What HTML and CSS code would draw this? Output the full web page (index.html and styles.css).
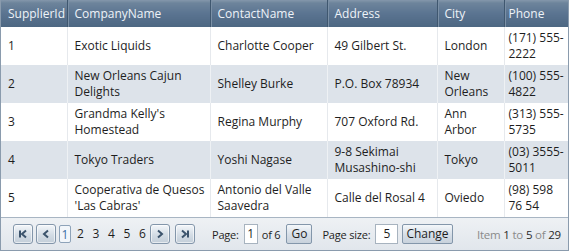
FILE: index.html
```html
<!DOCTYPE html>
<html>
<head>
<meta charset="utf-8">
<link rel="stylesheet" href="styles.css">
</head>
<body>
<div class="grid">
  <table class="table">
    <colgroup>
      <col class="c1"><col class="c2"><col class="c3"><col class="c4"><col class="c5"><col class="c6">
    </colgroup>
    <thead>
      <tr>
        <th>SupplierId</th><th>CompanyName</th><th>ContactName</th><th>Address</th><th>City</th><th class="ph">Phone</th>
      </tr>
    </thead>
    <tbody>
      <tr><td>1</td><td>Exotic Liquids</td><td>Charlotte Cooper</td><td>49 Gilbert St.</td><td>London</td><td class="ph">(171) 555-<wbr>2222</td></tr>
      <tr class="alt"><td>2</td><td>New Orleans Cajun Delights</td><td>Shelley Burke</td><td>P.O. Box 78934</td><td>New Orleans</td><td class="ph">(100) 555-<wbr>4822</td></tr>
      <tr><td>3</td><td>Grandma Kelly's Homestead</td><td>Regina Murphy</td><td>707 Oxford Rd.</td><td>Ann Arbor</td><td class="ph">(313) 555-<wbr>5735</td></tr>
      <tr class="alt"><td>4</td><td>Tokyo Traders</td><td>Yoshi Nagase</td><td>9-8 Sekimai Musashino-shi</td><td>Tokyo</td><td class="ph">(03) 3555-<wbr>5011</td></tr>
      <tr><td>5</td><td>Cooperativa de Quesos 'Las Cabras'</td><td>Antonio del Valle Saavedra</td><td>Calle del Rosal 4</td><td>Oviedo</td><td class="ph">(98) 598<br>76 54</td></tr>
    </tbody>
  </table>
  <div class="pager">
    <div class="nav">
      <span class="pbtn"><svg width="12" height="10" viewBox="0 0 12 10"><path d="M3 1.5V8.5" stroke="#3b536c" stroke-width="2" fill="none"/><path d="M9 1.5L5 5L9 8.5" stroke="#3b536c" stroke-width="2" fill="none"/></svg></span>
      <span class="pbtn"><svg width="12" height="10" viewBox="0 0 12 10"><path d="M8 1.5L4 5L8 8.5" stroke="#3b536c" stroke-width="2" fill="none"/></svg></span>
      <span class="nums">
        <span class="num current">1</span>
        <span class="num">2</span>
        <span class="num">3</span>
        <span class="num">4</span>
        <span class="num">5</span>
        <span class="num">6</span>
      </span>
      <span class="pbtn next"><svg width="12" height="10" viewBox="0 0 12 10"><path d="M4 1.5L8 5L4 8.5" stroke="#3b536c" stroke-width="2" fill="none"/></svg></span>
      <span class="pbtn"><svg width="12" height="10" viewBox="0 0 12 10"><path d="M3 1.5L7 5L3 8.5" stroke="#3b536c" stroke-width="2" fill="none"/><path d="M9 1.5V8.5" stroke="#3b536c" stroke-width="2" fill="none"/></svg></span>
    </div>
    <div class="goto">
      <span class="lbl">Page:</span>
      <span class="box small">1</span>
      <span class="lbl">of 6</span>
      <span class="btn go">Go</span>
    </div>
    <div class="size">
      <span class="lbl">Page size:</span>
      <span class="box wide">5</span>
      <span class="btn change">Change</span>
    </div>
    <div class="info">Item <b>1</b> to <b>5</b> of <b>29</b></div>
  </div>
</div>
</body>
</html>
```
FILE: styles.css
```css
html, body {
  margin: 0;
  padding: 0;
  background: #ffffff;
}
body {
  font-family: "Open Sans", "Noto Sans", sans-serif;
  font-size: 12px;
  color: #1e1e1e;
}
.grid {
  width: 567px;
  border: 1px solid #8a9bad;
  border-top: none;
}
.table {
  width: 100%;
  border-collapse: collapse;
  table-layout: fixed;
}
.c1 { width: 66px; }
.c2 { width: 143px; }
.c3 { width: 117px; }
.c4 { width: 110px; }
.c5 { width: 67px; }
.c6 { width: 64px; }
th {
  height: 27px;
  padding: 0 7px;
  box-sizing: border-box;
  text-align: left;
  font-weight: normal;
  color: #eef3f8;
  font-size: 12px;
  background: linear-gradient(#8497ab 0px, #6d849b 3px, #5a7390 14px, #4d6782 100%);
  border-left: 1px solid #3f576f;
  box-shadow: inset 1px 0 0 #7b90a6;
  vertical-align: middle;
}
th:first-child {
  border-left: none;
  box-shadow: none;
}
td {
  height: 38px;
  box-sizing: border-box;
  padding: 2px 2px 2px 7px;
  line-height: 16px;
  vertical-align: middle;
  border-left: 1px solid #e6e9ed;
}
td:first-child {
  border-left: none;
}
th.ph, td.ph {
  padding-left: 4px;
  padding-right: 0;
}
tr.alt td {
  background: #dde3ea;
  border-left-color: #eef1f4;
}
.pager {
  display: flex;
  align-items: center;
  height: 32px;
  border-top: 1px solid #a8b5c3;
  background: linear-gradient(#eef1f4, #e1e6ec);
  padding: 0 7px 0 12px;
  white-space: nowrap;
  font-size: 11px;
  letter-spacing: -0.2px;
}
.nav {
  display: flex;
  align-items: center;
  flex-shrink: 0;
}
.pbtn {
  display: flex;
  align-items: center;
  justify-content: center;
  width: 18px;
  height: 18px;
  border: 1px solid #8396aa;
  border-radius: 3px;
  background: linear-gradient(#f4f7fa, #d3dce5 55%, #c3ced9);
  box-shadow: inset 0 0 0 1px rgba(255,255,255,0.6);
  margin-right: 3px;
}
.nums {
  display: flex;
  align-items: center;
  gap: 3.5px;
  margin: 0 1.5px 0 0;
}
.pbtn.next {
  margin-right: 5px;
}
.num {
  display: inline-block;
  width: 12px;
  height: 18px;
  line-height: 18px;
  text-align: center;
  box-sizing: border-box;
  font-size: 12px;
  letter-spacing: 0;
}
.num.current {
  border: 1px solid #8ea3b9;
  border-radius: 2px;
  background: #f2f6fa;
  color: #3a6ea5;
}
.goto, .size {
  display: flex;
  align-items: center;
  flex-shrink: 0;
}
.goto {
  margin-left: 14px;
}
.size {
  margin-left: 10px;
}
.lbl {
  margin-right: 5px;
}
.box {
  display: inline-block;
  height: 20px;
  line-height: 18px;
  border: 1px solid #a7b3bf;
  background: #ffffff;
  text-align: center;
  margin-right: 4px;
  box-sizing: border-box;
  font-size: 12px;
  letter-spacing: 0;
}
.box.small { width: 14px; }
.box.wide { width: 23px; }
.btn {
  display: inline-block;
  height: 20px;
  line-height: 18px;
  padding: 0 4px;
  border: 1px solid #8396aa;
  border-radius: 2px;
  background: linear-gradient(#f4f7fa, #d6dee7 55%, #c8d2dc);
  box-sizing: border-box;
  font-size: 12px;
  letter-spacing: 0;
  color: #1e1e1e;
}
.go {
  margin-left: 1px;
}
.change {
  padding: 0 3px;
}
.info {
  margin-left: auto;
  color: #8a8a8a;
  font-size: 11.5px;
}
.info b {
  font-weight: normal;
  color: #2a2a2a;
}
```
